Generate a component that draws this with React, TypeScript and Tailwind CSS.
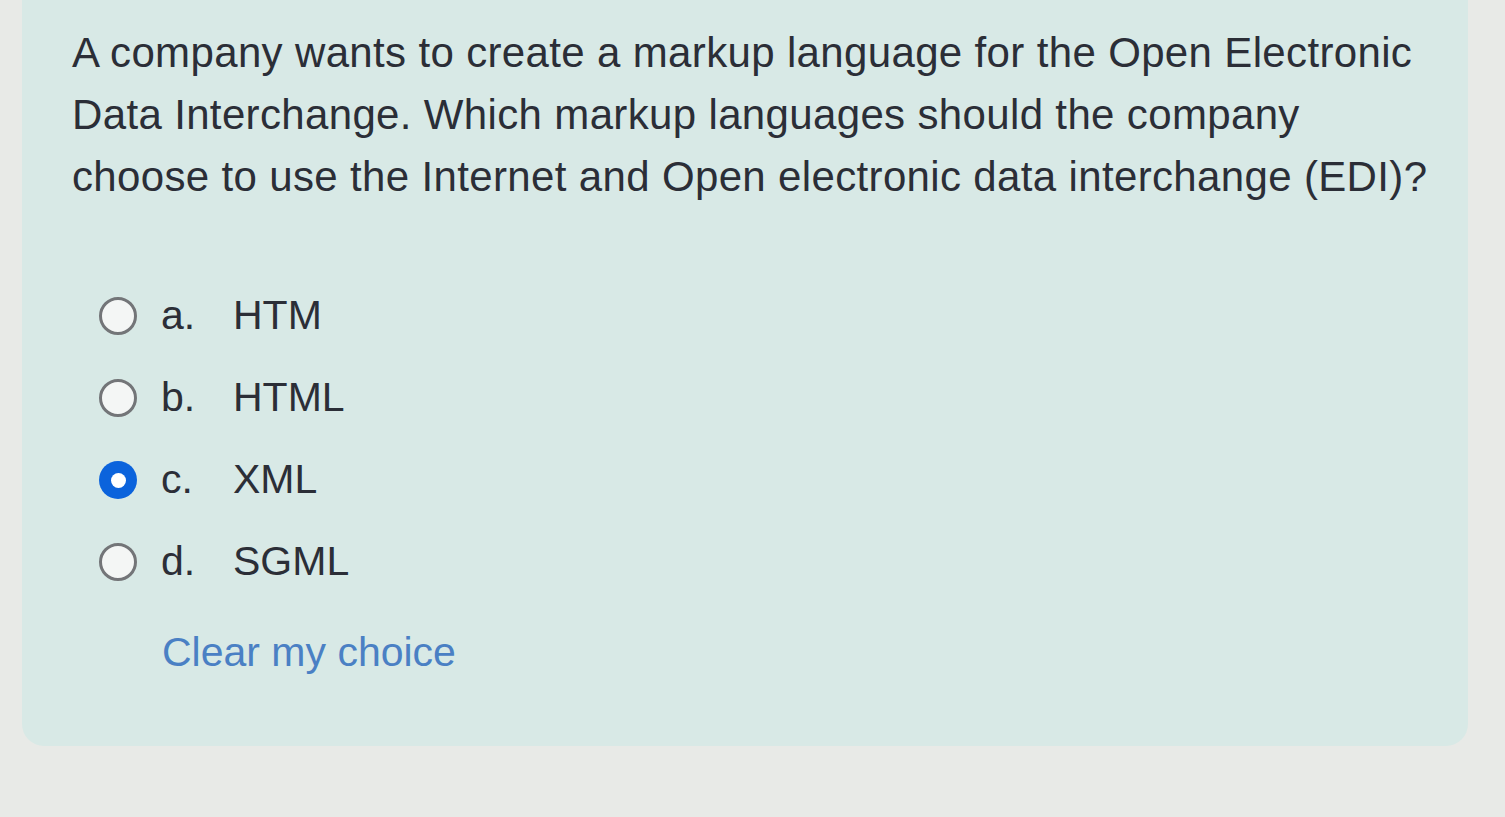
import { useState } from 'react';

const options = [
  { key: 'a', label: 'HTM' },
  { key: 'b', label: 'HTML' },
  { key: 'c', label: 'XML' },
  { key: 'd', label: 'SGML' },
];

function Radio({ checked }: { checked: boolean }) {
  if (checked) {
    return (
      <span className="flex h-[38px] w-[38px] shrink-0 items-center justify-center rounded-full bg-[#0b63dc]">
        <span className="h-[15px] w-[15px] rounded-full bg-white" />
      </span>
    );
  }
  return (
    <span className="h-[38px] w-[38px] shrink-0 rounded-full border-[3px] border-[#737578] bg-[#f4f6f5]" />
  );
}

export default function App() {
  const [selected, setSelected] = useState<string | null>('c');

  return (
    <div
      className="h-[817px] w-[1505px] overflow-hidden bg-[#e8eae7] pl-[22px] pr-[37px] text-[#2b2e37]"
      style={{ fontFamily: '"Liberation Sans", Arial, sans-serif' }}
    >
      <div className="h-[746px] rounded-b-[22px] bg-[#d8e9e6] pl-[50px] pt-[22px]">
        <p className="text-[42px] leading-[62px] tracking-[0.35px]">
          <span className="block whitespace-nowrap">A company wants to create a markup language for the Open Electronic</span>
          <span className="block whitespace-nowrap">Data Interchange. Which markup languages should the company</span>
          <span className="block whitespace-nowrap">choose to use the Internet and Open electronic data interchange (EDI)?</span>
        </p>

        <div className="mt-[85px] flex flex-col gap-[36px] pl-[27px]">
          {options.map((o) => (
            <label
              key={o.key}
              className="flex h-[46px] cursor-pointer items-center text-[41px]"
              onClick={() => setSelected(o.key)}
            >
              <Radio checked={selected === o.key} />
              <span className="ml-[24px] w-[72px]">{o.key}.</span>
              <span>{o.label}</span>
            </label>
          ))}
        </div>

        <button
          className="mt-[37px] ml-[90px] cursor-pointer text-[41px] text-[#4a80c4]"
          onClick={() => setSelected(null)}
        >
          Clear my choice
        </button>
      </div>
    </div>
  );
}
